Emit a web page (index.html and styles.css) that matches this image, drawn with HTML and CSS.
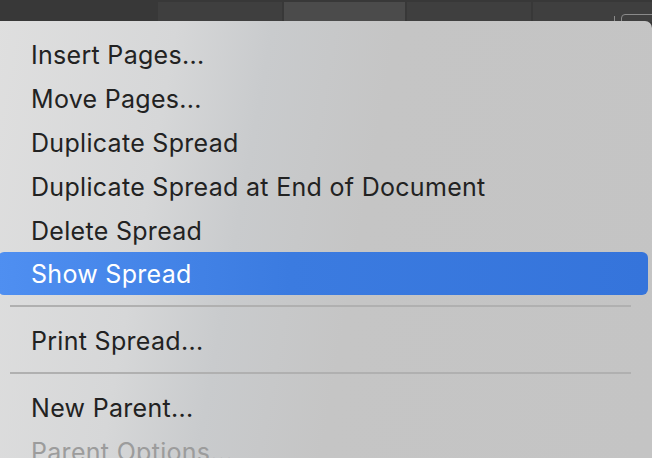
FILE: index.html
```html
<!DOCTYPE html>
<html lang="en">
<head>
    <meta charset="UTF-8">
    <meta name="viewport" content="width=device-width, initial-scale=1.0">
    <title>Pages Menu</title>
    <link rel="stylesheet" href="styles.css">
</head>
<body>
    <div class="toolbar">
        <div class="tab">Properties</div>
        <div class="tab active">Pages</div>
        <div class="tab">CC Libraries</div>
        <div class="tab tab-last"><span class="tick"></span><span class="box"></span></div>
    </div>
    <div class="menu">
        <div class="item">Insert Pages...</div>
        <div class="item">Move Pages...</div>
        <div class="item">Duplicate Spread</div>
        <div class="item">Duplicate Spread at End of Document</div>
        <div class="item">Delete Spread</div>
        <div class="item selected">Show Spread</div>
        <div class="separator"></div>
        <div class="item">Print Spread...</div>
        <div class="separator"></div>
        <div class="item">New Parent...</div>
        <div class="item disabled">Parent Options...</div>
    </div>
</body>
</html>
```

FILE: styles.css
```css
* {
    box-sizing: border-box;
    margin: 0;
    padding: 0;
}

body {
    width: 652px;
    height: 458px;
    overflow: hidden;
    position: relative;
    background: #363636;
    font-family: 'Inter', 'Noto Sans', sans-serif;
}

.toolbar {
    display: flex;
    height: 22px;
    padding: 2px 0 0 158px;
    gap: 2px;
    background: #383838;
}

.tab {
    width: 124px;
    background: #3f3f3f;
    color: #bdbdbd;
    font-size: 18px;
    line-height: 20px;
    text-align: center;
    padding-top: 17px;
    white-space: nowrap;
}

.tab.active {
    width: 121px;
    background: #4b4b4b;
}

.tab-last {
    flex: 1;
    position: relative;
}

.tick {
    position: absolute;
    left: 81px;
    top: 14px;
    width: 1px;
    height: 8px;
    background: #8a8a8a;
}

.box {
    position: absolute;
    left: 88px;
    top: 12px;
    width: 40px;
    height: 20px;
    border: 1px solid #8a8a8a;
    border-radius: 4px;
}

/* dropdown */
.menu {
    position: absolute;
    top: 21px;
    left: -6px;
    width: 658px;
    height: 437px;
    overflow: hidden;
    padding: 11px 4px 0;
    border-radius: 7px 7px 0 0;
    background: linear-gradient(100deg, #dfdfdf 0%, #d6d7d8 25%, #c9cbcd 38%, #c5c5c5 55%, #c4c4c4 100%);
}

.item {
    height: 44px;
    line-height: 46px;
    padding-left: 33px;
    font-size: 25px;
    letter-spacing: 0.3px;
    color: #222;
    white-space: nowrap;
}

.item.selected {
    height: 43px;
    line-height: 44px;
    color: #fff;
    border-radius: 6px;
    background: linear-gradient(to right, #4f8ff1, #3b7be0 45%, #3574db);
}

.item.disabled {
    color: #9c9c9c;
}

.separator {
    height: 23px;
    padding: 10px 17px 0 12px;
}

.separator::before {
    content: '';
    display: block;
    height: 2px;
    background: #b0b0b0;
}
```
